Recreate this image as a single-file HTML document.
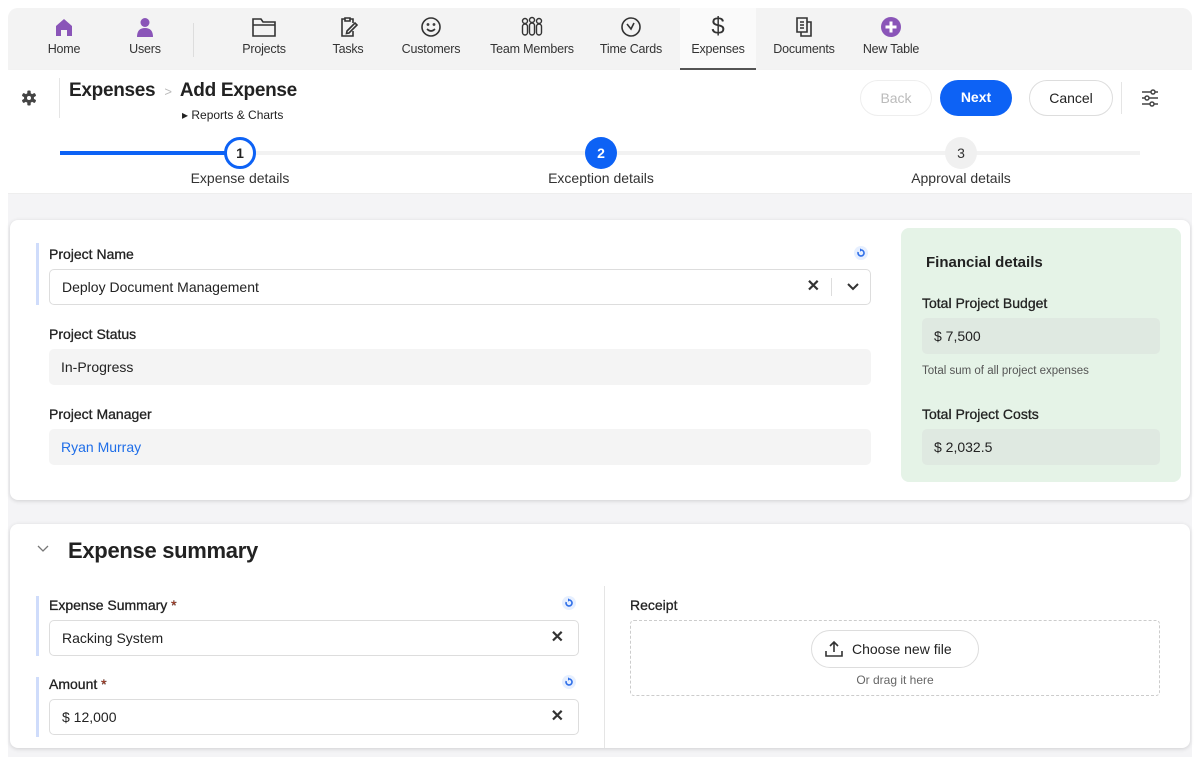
<!DOCTYPE html>
<html><head><meta charset="utf-8"><style>
*{box-sizing:border-box;margin:0;padding:0}
body{width:1200px;height:757px;background:#fff;font-family:"Liberation Sans",sans-serif;color:#222;position:relative;overflow:hidden}
.a{position:absolute}
.frame{left:8px;top:8px;width:1184px;height:749px;background:#f4f4f6;border-radius:10px 10px 0 0;overflow:hidden}
.nav{left:0;top:0;width:1184px;height:62px;background:#f3f3f3}
.ni{position:absolute;top:0;height:62px;text-align:center;font-size:12.5px;color:#333;letter-spacing:-.2px}
.ni svg{display:block;margin:8px auto 4px}
.hdr{left:0;top:62px;width:1184px;height:56px;background:#fff;box-shadow:0 2px 3px rgba(0,0,0,.08)}
.step{left:0;top:118px;width:1184px;height:68px;background:#fff;border-bottom:1px solid #eee}
.btn{position:absolute;top:10px;height:36px;border-radius:18px;font-size:14px;text-align:center;line-height:34px}
.card{background:#fff;border-radius:8px;box-shadow:0 1px 4px rgba(0,0,0,.15)}
.lbl{font-size:14px;color:#222;-webkit-text-stroke:.3px #222}
.fld{position:absolute;height:36px;border-radius:5px;font-size:14px;line-height:36px;padding-left:12px}
.ro{background:#f4f4f4}
.inp{background:#fff;border:1px solid #ddd;line-height:34px}
.bar{position:absolute;width:3px;background:#cfdcfb}
.rf{position:absolute;width:14px;height:14px;border-radius:50%;background:#e6efff}
.x{position:absolute;font-size:16px;font-weight:bold;color:#333}
.star{color:#e0401f}
</style></head><body>
<div class="a frame">
 <div class="a nav">
  <div class="ni" style="left:36px;width:40px"><svg width="22" height="22" viewBox="0 0 22 22"><path d="M3 10 L11 3 L19 10 V20 H14 V14 H8 V20 H3Z" fill="#8a55b8"/></svg>Home</div>
  <div class="ni" style="left:117px;width:40px"><svg width="22" height="22" viewBox="0 0 22 22"><circle cx="11" cy="6.5" r="4.5" fill="#8a55b8"/><path d="M3 21 Q3 12 11 12 Q19 12 19 21Z" fill="#8a55b8"/></svg>Users</div>
  <div class="a" style="left:185px;top:15px;width:1px;height:34px;background:#ddd"></div>
  <div class="ni" style="left:226px;width:60px"><svg width="26" height="22" viewBox="0 0 26 22" fill="none" stroke="#333" stroke-width="1.6"><path d="M2 3 H10 L12 6 H24 V20 H2Z M2 9 H24"/></svg>Projects</div>
  <div class="ni" style="left:318px;width:44px"><svg width="22" height="22" viewBox="0 0 22 22" fill="none" stroke="#333" stroke-width="1.6"><path d="M8 3 H5 V20 H16 V15 M13 3 H16 V7 M8 2 H13 V5 H8Z M10 15 L18 7 L20 9 L12 17 L9.5 17.5Z"/></svg>Tasks</div>
  <div class="ni" style="left:388px;width:70px"><svg width="22" height="22" viewBox="0 0 22 22" fill="none" stroke="#333" stroke-width="1.6"><circle cx="11" cy="11" r="9"/><path d="M7 13 Q11 17 15 13"/><circle cx="8" cy="8.5" r=".6"/><circle cx="14" cy="8.5" r=".6"/></svg>Customers</div>
  <div class="ni" style="left:476px;width:96px"><svg width="26" height="22" viewBox="0 0 26 22" fill="none" stroke="#333" stroke-width="1.4"><circle cx="6" cy="5" r="2.5"/><circle cx="13" cy="4" r="2.5"/><circle cx="20" cy="5" r="2.5"/><rect x="3.5" y="8" width="5" height="11" rx="2.5"/><rect x="10.5" y="7" width="5" height="12" rx="2.5"/><rect x="17.5" y="8" width="5" height="11" rx="2.5"/></svg>Team Members</div>
  <div class="ni" style="left:588px;width:70px"><svg width="24" height="22" viewBox="0 0 24 22" fill="none" stroke="#333" stroke-width="1.6"><circle cx="12" cy="11" r="9"/><path d="M8 8 L12 13 L15 7"/></svg>Time Cards</div>
  <div class="ni" style="left:672px;width:76px;background:#fafafa;border-bottom:2px solid #555"><div style="font-size:24px;margin:6px 0 2px;line-height:26px">$</div>Expenses</div>
  <div class="ni" style="left:760px;width:72px"><svg width="24" height="22" viewBox="0 0 24 22" fill="none" stroke="#333" stroke-width="1.6"><path d="M5 2 H15 V16 H5Z M15 6 H19 V20 H9 V16 M8 6 H12 M8 9 H12 M8 12 H12"/></svg>Documents</div>
  <div class="ni" style="left:850px;width:66px"><svg width="22" height="22" viewBox="0 0 22 22"><circle cx="11" cy="11" r="10" fill="#8a55b8"/><path d="M11 5.5 V16.5 M5.5 11 H16.5" stroke="#fff" stroke-width="3"/></svg>New Table</div>
 </div>
 <div class="a hdr">
  <svg class="a" style="left:13px;top:20px" width="16" height="16" viewBox="0 0 16 16"><g fill="#444"><rect x="6.3" y="0.5" width="3.4" height="15" rx="1"/><rect x="6.3" y="0.5" width="3.4" height="15" rx="1" transform="rotate(60 8 8)"/><rect x="6.3" y="0.5" width="3.4" height="15" rx="1" transform="rotate(120 8 8)"/><circle cx="8" cy="8" r="5"/></g><circle cx="8" cy="8" r="2" fill="#fff"/></svg>
  <div class="a" style="left:51px;top:8px;width:1px;height:40px;background:#e5e5e5"></div>
  <div class="a" style="left:61px;top:10px;font-size:19px;font-weight:bold;letter-spacing:-.3px">Expenses <span style="color:#bbb;font-size:13px;font-weight:normal;margin:0 4px">&gt;</span> Add Expense</div>
  <div class="a" style="left:174px;top:38px;font-size:12px;color:#222">▸ Reports &amp; Charts</div>
  <div class="btn" style="left:852px;width:72px;border:1px solid #eee;color:#bbb">Back</div>
  <div class="btn" style="left:932px;width:72px;background:#0d62f5;color:#fff;font-weight:bold">Next</div>
  <div class="btn" style="left:1021px;width:84px;border:1px solid #ddd;color:#222">Cancel</div>
  <div class="a" style="left:1113px;top:12px;width:1px;height:32px;background:#e5e5e5"></div>
  <svg class="a" style="left:1132px;top:18px" width="20" height="20" viewBox="0 0 20 20" fill="none" stroke="#444" stroke-width="1.5"><path d="M2 4 H18 M2 10 H18 M2 16 H18"/><circle cx="13" cy="4" r="2" fill="#fff"/><circle cx="7" cy="10" r="2" fill="#fff"/><circle cx="12" cy="16" r="2" fill="#fff"/></svg>
 </div>
 <div class="a step">
  <div class="a" style="left:52px;top:25px;width:1080px;height:4px;background:#f2f2f2"></div>
  <div class="a" style="left:52px;top:25px;width:180px;height:4px;background:#0d62f5"></div>
  <div class="a" style="left:216px;top:11px;width:32px;height:32px;border-radius:50%;background:#fff;border:3px solid #0d62f5;text-align:center;line-height:26px;font-weight:bold;font-size:14px">1</div>
  <div class="a" style="left:577px;top:11px;width:32px;height:32px;border-radius:50%;background:#0d62f5;color:#fff;text-align:center;line-height:32px;font-weight:bold;font-size:14px">2</div>
  <div class="a" style="left:937px;top:11px;width:32px;height:32px;border-radius:50%;background:#f0f0f0;color:#333;text-align:center;line-height:32px;font-size:14px">3</div>
  <div class="a" style="left:132px;top:44px;width:200px;text-align:center;font-size:14px;color:#333">Expense details</div>
  <div class="a" style="left:493px;top:44px;width:200px;text-align:center;font-size:14px;color:#333">Exception details</div>
  <div class="a" style="left:853px;top:44px;width:200px;text-align:center;font-size:14px;color:#333">Approval details</div>
 </div>
</div>

<svg width="0" height="0" style="position:absolute"><defs><symbol id="rf" viewBox="0 0 14 14"><circle cx="7" cy="7" r="7" fill="#e6efff"/><path d="M4.2 6 A3 3 0 1 0 7 4" fill="none" stroke="#2f6fe8" stroke-width="1.6"/><path d="M6 2.3 L8.2 4 L6 5.7Z" fill="#2f6fe8"/></symbol></defs></svg>

<div class="a card" style="left:10px;top:220px;width:1180px;height:280px">
 <div class="bar" style="left:26px;top:23px;height:62px"></div>
 <div class="a lbl" style="left:39px;top:26px">Project Name</div>
 <svg class="a" style="left:844px;top:26px" width="14" height="14"><use href="#rf"/></svg>
 <div class="fld inp" style="left:39px;top:49px;width:822px">Deploy Document Management
  <span class="x" style="right:50px;top:0">✕</span><span class="a" style="right:38px;top:8px;width:1px;height:18px;background:#ddd"></span>
  <svg class="a" style="right:10px;top:12px" width="14" height="10" viewBox="0 0 14 10"><path d="M2 2 L7 7 L12 2" fill="none" stroke="#333" stroke-width="2"/></svg></div>
 <div class="a lbl" style="left:39px;top:106px">Project Status</div>
 <div class="fld ro" style="left:39px;top:129px;width:822px">In-Progress</div>
 <div class="a lbl" style="left:39px;top:186px">Project Manager</div>
 <div class="fld ro" style="left:39px;top:209px;width:822px;color:#1f6ee8">Ryan Murray</div>
 <div class="a" style="left:891px;top:8px;width:280px;height:254px;background:#e5f3e7;border-radius:8px">
  <div class="a" style="left:25px;top:26px;font-size:15px;font-weight:bold">Financial details</div>
  <div class="a lbl" style="left:21px;top:67px">Total Project Budget</div>
  <div class="fld" style="left:21px;top:90px;width:238px;background:#dfe9e1">$ 7,500</div>
  <div class="a" style="left:21px;top:137px;font-size:11.5px;color:#555">Total sum of all project expenses</div>
  <div class="a lbl" style="left:21px;top:178px">Total Project Costs</div>
  <div class="fld" style="left:21px;top:201px;width:238px;background:#dfe9e1">$ 2,032.5</div>
 </div>
</div>

<div class="a card" style="left:10px;top:524px;width:1180px;height:224px">
 <svg class="a" style="left:26px;top:20px" width="14" height="10" viewBox="0 0 14 10"><path d="M2 2 L7 7 L12 2" fill="none" stroke="#777" stroke-width="1.3"/></svg>
 <div class="a" style="left:58px;top:14px;font-size:22px;font-weight:bold;letter-spacing:-.3px">Expense summary</div>
 <div class="a" style="left:594px;top:62px;width:1px;height:162px;background:#e5e5e5"></div>
 <div class="bar" style="left:26px;top:72px;height:60px"></div>
 <div class="a lbl" style="left:39px;top:73px">Expense Summary <span class="star">*</span></div>
 <svg class="a" style="left:552px;top:72px" width="14" height="14"><use href="#rf"/></svg>
 <div class="fld inp" style="left:39px;top:96px;width:530px">Racking System<span class="x" style="right:14px">✕</span></div>
 <div class="bar" style="left:26px;top:153px;height:60px"></div>
 <div class="a lbl" style="left:39px;top:152px">Amount <span class="star">*</span></div>
 <svg class="a" style="left:552px;top:151px" width="14" height="14"><use href="#rf"/></svg>
 <div class="fld inp" style="left:39px;top:175px;width:530px">$ 12,000<span class="x" style="right:14px">✕</span></div>
 <div class="a lbl" style="left:620px;top:73px">Receipt</div>
 <div class="a" style="left:620px;top:96px;width:530px;height:76px;border:1.5px dashed #ccc;border-radius:4px">
  <div class="a" style="left:180px;top:9px;width:168px;height:38px;border:1px solid #ddd;border-radius:19px;font-size:14px;line-height:36px;padding-left:40px">Choose new file
   <svg class="a" style="left:12px;top:9px" width="20" height="18" viewBox="0 0 20 18" fill="none" stroke="#333" stroke-width="1.6"><path d="M10 12 V2 M6 6 L10 2 L14 6 M2 11 V16 H18 V11"/></svg></div>
  <div class="a" style="left:0;top:52px;width:100%;text-align:center;font-size:12px;color:#666">Or drag it here</div>
 </div>
</div>
</body></html>
